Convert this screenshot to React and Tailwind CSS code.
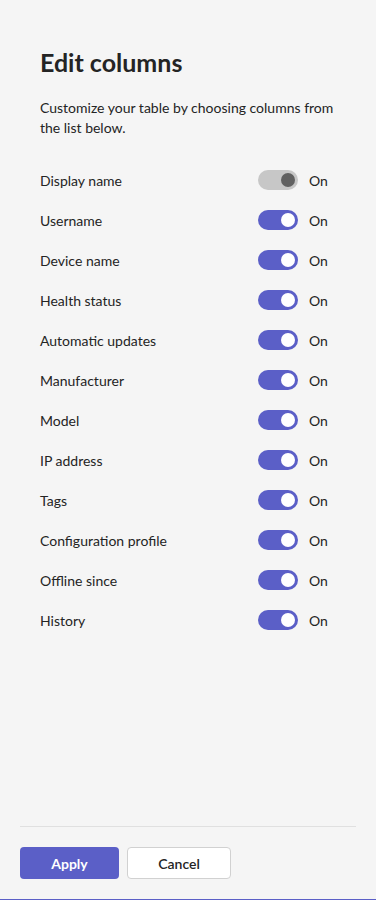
import React from "react";

const rows = [
  "Display name",
  "Username",
  "Device name",
  "Health status",
  "Automatic updates",
  "Manufacturer",
  "Model",
  "IP address",
  "Tags",
  "Configuration profile",
  "Offline since",
  "History",
];

function Toggle({ disabled }) {
  return (
    <div
      className={`w-[40px] h-[20px] rounded-full flex items-center justify-end pr-[3px] ${
        disabled ? "bg-[#c7c7c7]" : "bg-[#5b5fc7]"
      }`}
    >
      <div
        className={`w-[14px] h-[14px] rounded-full ${
          disabled ? "bg-[#616161]" : "bg-white"
        }`}
      />
    </div>
  );
}

export default function App() {
  return (
    <div
      className="w-[376px] h-[900px] bg-[#f5f5f5] flex flex-col text-[#242424] border-b border-[#5b5fc7]"
      style={{ fontFamily: '"Segoe UI", Lato, "Noto Sans", sans-serif' }}
    >
      <div className="flex-1 px-[40px] pt-[46px]">
        <h1 className="text-[25px] font-bold leading-[32px]">Edit columns</h1>
        <p className="mt-[20px] text-[14px] leading-[20px] text-[#242424] w-[300px]">
          Customize your table by choosing columns from the list below.
        </p>
        <div className="mt-[22px] flex flex-col w-[288px]">
          {rows.map((r, i) => (
            <div key={r} className="h-[40px] flex items-center">
              <span className="flex-1 text-[14px]">{r}</span>
              <Toggle disabled={i === 0} />
              <span className="ml-[11px] w-[19px] text-[14px]">On</span>
            </div>
          ))}
        </div>
      </div>
      <div className="mx-[20px] border-t border-[#e0e0e0]" />
      <div className="px-[20px] pt-[20px] pb-[20px] flex gap-[8px]">
        <button className="w-[99px] h-[32px] rounded-[4px] bg-[#5b5fc7] text-white text-[14px] font-bold">
          Apply
        </button>
        <button className="w-[104px] h-[32px] rounded-[4px] bg-white border border-[#d1d1d1] text-[14px] font-semibold text-[#242424]">
          Cancel
        </button>
      </div>
    </div>
  );
}
